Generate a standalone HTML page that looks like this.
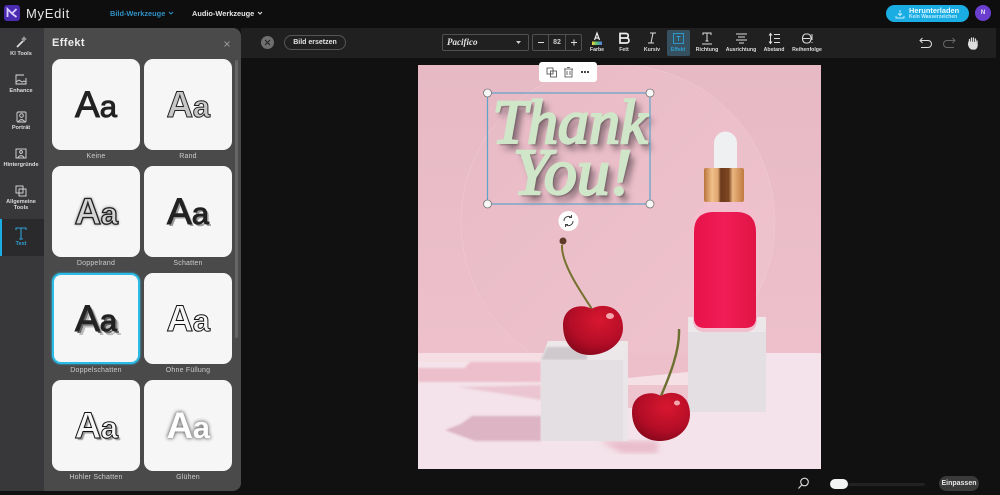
<!DOCTYPE html>
<html lang="de"><head><meta charset="utf-8"><title>MyEdit</title>
<style>
*{box-sizing:border-box;margin:0;padding:0}
html,body{width:1000px;height:495px;overflow:hidden;background:#111112;font-family:"Liberation Sans",sans-serif;color:#e8e8e8}
.a{position:absolute}
.c{position:absolute;text-align:center;transform:translateX(-50%);white-space:nowrap;font-weight:bold}
.side{font-size:5.6px;line-height:6px;color:#ddd}
.tl{font-size:5.2px;color:#ddd;top:47px}
.tile{position:absolute;width:88px;height:91px;background:#f6f6f6;border-radius:9px;display:flex;align-items:center;justify-content:center}
.aa{font:normal 37px/40px "Liberation Sans",sans-serif;color:#222;-webkit-text-stroke:1px #222;margin-top:2px}
.aa i{font-style:normal;font-size:31px}
.h{font-weight:bold;letter-spacing:-.5px}
.lab{position:absolute;width:88px;text-align:center;font-size:7px;color:#ccc;letter-spacing:.2px}
svg{position:absolute;overflow:visible}
</style></head><body>
<div class="a" style="left:0;top:0;width:1000px;height:28px;background:#0e0e0f"></div>
<div class="a" style="left:241px;top:28px;width:755px;height:30px;background:#202021"></div>

<svg style="left:4px;top:5px" width="16" height="16" viewBox="0 0 16 16"><rect width="16" height="16" rx="3" fill="#4b2bb0"/><path d="M3.500 12V4L8 8.500 12.500 4M8.500 9l4 3" fill="none" stroke="#d9d0ff" stroke-width="1.800"/></svg>
<div class="a" style="left:26px;top:5px;font-size:13px;line-height:18px;color:#e6e6e6;letter-spacing:.7px">MyEdit</div>
<div class="a" style="left:110px;top:9px;font-size:7.400px;line-height:10px;font-weight:bold;color:#2f90c4">Bild-Werkzeuge</div>
<svg style="left:168px;top:11px" width="6" height="5"><path d="M1 1l2 2 2-2" fill="none" stroke="#2f90c4" stroke-width="1"/></svg>
<div class="a" style="left:192px;top:9px;font-size:7.400px;line-height:10px;font-weight:bold;color:#e5e5e5">Audio-Werkzeuge</div>
<svg style="left:257px;top:11px" width="6" height="5"><path d="M1 1l2 2 2-2" fill="none" stroke="#e5e5e5" stroke-width="1"/></svg>

<div class="a" style="left:886px;top:5px;width:83px;height:17px;border-radius:9px;background:#19ade4"></div>
<svg style="left:895px;top:9px" width="10" height="10" viewBox="0 0 10 10"><path d="M5 1v5M3 4.500l2 2 2-2M1 7v2h8V7" fill="none" stroke="#c9eefa" stroke-width=".9"/></svg>
<div class="a" style="left:909px;top:6.500px;font-size:7.400px;line-height:8px;font-weight:bold;color:#eafaff">Herunterladen</div>
<div class="a" style="left:909px;top:14px;font-size:5px;line-height:6px;font-weight:bold;color:#c5eefb">Kein Wasserzeichen</div>
<div class="a" style="left:975px;top:5px;width:16px;height:16px;border-radius:50%;background:#6a3fcf;color:#eee;font-size:6px;font-weight:bold;line-height:16px;text-align:center">N</div>

<!-- left rail + panel -->
<div class="a" style="left:0;top:28px;width:241px;height:463px;background:#4a4a4b;border-radius:0 8px 8px 0"></div>
<div class="a" style="left:0;top:28px;width:44px;height:463px;background:#38383a"></div>
<div class="a" style="left:0;top:219px;width:44px;height:37px;background:#2a2a2c"></div>
<div class="a" style="left:0;top:219px;width:2px;height:37px;background:#19ade4"></div>

<svg style="left:15px;top:36px" width="12" height="12" viewBox="0 0 12 12" fill="none" stroke="#ddd"><path d="M2 11l6-6" stroke-width="1.800"/><path d="M9 1l.6 1.400L11 3l-1.400.6L9 5l-.6-1.400L7 3l1.400-.6z" stroke-width=".7"/></svg>
<div class="c side" style="left:21px;top:51px">KI Tools</div>
<svg style="left:15px;top:74px" width="12" height="11" viewBox="0 0 12 11" fill="none" stroke="#ddd"><path d="M9 1H1v9h10V4M1 8l3-2 3 2 2-1 2 1" stroke-width=".9"/></svg>
<div class="c side" style="left:21px;top:88px">Enhance</div>
<svg style="left:16px;top:111px" width="11" height="12" viewBox="0 0 11 12" fill="none" stroke="#ddd" stroke-width=".9"><rect x="1" y="1" width="9" height="10" rx="1"/><circle cx="5.500" cy="4.500" r="1.800"/><path d="M2.500 11c0-3 6-3 6 0"/></svg>
<div class="c side" style="left:21px;top:125px">Porträt</div>
<svg style="left:15px;top:148px" width="12" height="11" viewBox="0 0 12 11" fill="none" stroke="#ddd" stroke-width=".9"><rect x="1" y="1" width="10" height="9"/><circle cx="6" cy="4" r="1.400"/><path d="M3 10c0-3 6-3 6 0"/></svg>
<div class="c side" style="left:21px;top:162px">Hintergründe</div>
<svg style="left:15px;top:185px" width="12" height="12" viewBox="0 0 12 12" fill="none" stroke="#ddd" stroke-width=".9"><rect x="1" y="1" width="7" height="7"/><rect x="4" y="4" width="7" height="7"/></svg>
<div class="c side" style="left:21px;top:199px">Allgemeine<br>Tools</div>
<svg style="left:15px;top:227px" width="12" height="13" viewBox="0 0 12 13" fill="none" stroke="#2f9fd2" stroke-width="1.100"><path d="M1 3V1h10v2M6 1v11M4 12h4"/></svg>
<div class="c side" style="left:21px;top:241px;color:#2f9fd2">Text</div>

<div class="a" style="left:52px;top:37px;font-size:11px;line-height:13px;font-weight:bold;color:#eee;letter-spacing:.4px">Effekt</div>
<svg style="left:224px;top:41px" width="6" height="6"><path d="M.5.500l5 5m0-5l-5 5" stroke="#aaa" stroke-width=".8"/></svg>
<div class="a" style="left:235px;top:60px;width:3px;height:278px;background:#666;border-radius:2px"></div>

<div class="tile" style="left:52px;top:59px"><span class="aa">A<i>a</i></span></div>
<div class="tile" style="left:144px;top:59px"><span class="aa h" style="color:#c8c8c8;-webkit-text-stroke:1px #222">A<i>a</i></span></div>
<div class="tile" style="left:52px;top:166px"><span class="aa h" style="color:#d4d4d4;-webkit-text-stroke:1.300px #222;text-shadow:0 0 3px #555">A<i>a</i></span></div>
<div class="tile" style="left:144px;top:166px"><span class="aa" style="text-shadow:2px 2px 0 #999">A<i>a</i></span></div>
<div class="tile" style="left:52px;top:273px;border:2px solid #2cbbe6;box-shadow:0 0 2px #2cbbe6"><span class="aa" style="text-shadow:2px 2px 0 #666,4px 4px 0 #bbb">A<i>a</i></span></div>
<div class="tile" style="left:144px;top:273px"><span class="aa h" style="color:#f6f6f6;-webkit-text-stroke:1px #111">A<i>a</i></span></div>
<div class="tile" style="left:52px;top:380px"><span class="aa h" style="color:#f6f6f6;-webkit-text-stroke:1px #111;text-shadow:2px 2px 1px #999">A<i>a</i></span></div>
<div class="tile" style="left:144px;top:380px"><span class="aa h" style="color:#fff;-webkit-text-stroke:0;text-shadow:0 0 3px #666,0 0 5px #888">A<i>a</i></span></div>
<div class="lab" style="left:52px;top:153px">Keine</div>
<div class="lab" style="left:144px;top:153px">Rand</div>
<div class="lab" style="left:52px;top:260px">Doppelrand</div>
<div class="lab" style="left:144px;top:260px">Schatten</div>
<div class="lab" style="left:52px;top:367px">Doppelschatten</div>
<div class="lab" style="left:144px;top:367px">Ohne Füllung</div>
<div class="lab" style="left:52px;top:474px">Hohler Schatten</div>
<div class="lab" style="left:144px;top:474px">Glühen</div>

<!-- toolbar -->
<div class="a" style="left:261px;top:36px;width:13px;height:13px;border-radius:50%;background:#6f6f70"></div>
<svg style="left:265px;top:40px" width="5" height="5"><path d="M0 0l5 5m0-5l-5 5" stroke="#222" stroke-width="1"/></svg>
<div class="a" style="left:284px;top:35px;width:62px;height:15px;border:1px solid #555;border-radius:8px;font-size:7px;font-weight:bold;line-height:13px;text-align:center;color:#e3e3e3">Bild ersetzen</div>
<div class="a" style="left:442px;top:34px;width:87px;height:17px;border:1px solid #505050;border-radius:2px"></div>
<div class="a" style="left:447px;top:37px;font:italic bold 9px/11px 'Liberation Serif',serif;color:#e5e5e5">Pacifico</div>
<svg style="left:516px;top:41px" width="5" height="3"><path d="M0 0h5L2.500 3z" fill="#ccc"/></svg>
<div class="a" style="left:532px;top:34px;width:50px;height:17px;border:1px solid #505050;border-radius:2px"></div>
<div class="a" style="left:548px;top:34px;width:18px;height:17px;border:1px solid #505050;border-width:0 1px;font-size:7px;font-weight:bold;line-height:17px;text-align:center;color:#ccc">82</div>
<svg style="left:537px;top:39px" width="40" height="7"><path d="M1 3.500h6M34 3.500h6M37 .5v6" stroke="#ddd" stroke-width="1"/></svg>

<svg style="left:591px;top:32px" width="12" height="14" viewBox="0 0 12 14"><path d="M3.500 8L6 1l2.500 7M4.500 6h3" fill="none" stroke="#eee" stroke-width="1.200"/><defs><linearGradient id="rb" x1="0" x2="1"><stop offset="0" stop-color="#f6d53b"/><stop offset=".5" stop-color="#4fc07a"/><stop offset="1" stop-color="#5a7be0"/></linearGradient></defs><rect x="1" y="9.500" width="10" height="3.500" fill="url(#rb)"/></svg>
<div class="c tl" style="left:597px">Farbe</div>
<svg style="left:618px;top:32px" width="12" height="12" viewBox="0 0 12 12"><path d="M2 1.500h6a2.200 2.200 0 010 4.500H2zM2 6h6.500a2.500 2.500 0 010 5H2z" fill="none" stroke="#eee" stroke-width="1.700"/></svg>
<div class="c tl" style="left:624px">Fett</div>
<svg style="left:647px;top:32px" width="10" height="12" viewBox="0 0 10 12"><path d="M3 1h6M1 11h6M6 1L4 11" fill="none" stroke="#ddd" stroke-width="1"/></svg>
<div class="c tl" style="left:652px">Kursiv</div>
<div class="a" style="left:667px;top:30px;width:23px;height:26px;border-radius:2px;background:#37505f"></div>
<svg style="left:673px;top:33px" width="11" height="11" viewBox="0 0 11 11" fill="none" stroke="#2f9fd2" stroke-width=".9"><rect x=".5" y=".5" width="10" height="10"/><path d="M3.500 3.500h4M5.500 3.500v4.500"/></svg>
<div class="c tl" style="left:678px;color:#2f9fd2">Effekt</div>
<svg style="left:701px;top:32px" width="12" height="13" viewBox="0 0 12 13" fill="none" stroke="#ddd" stroke-width="1"><path d="M2 3V1h8v2M6 1v8M4.500 9h3M1 12h10"/></svg>
<div class="c tl" style="left:707px">Richtung</div>
<svg style="left:735px;top:33px" width="12" height="11"><path d="M1 1h11M3 4h7M1 7h11M4 10h5" stroke="#ddd" stroke-width="1"/></svg>
<div class="c tl" style="left:741px">Ausrichtung</div>
<svg style="left:769px;top:33px" width="11" height="11"><path d="M1.500 1v9M0 2.500l1.500-2 1.500 2M0 8.500l1.500 2 1.500-2M5 1.500h6M5 5.500h6M5 9.500h6" stroke="#ddd" stroke-width="1" fill="none"/></svg>
<div class="c tl" style="left:774px">Abstand</div>
<svg style="left:801px;top:33px" width="12" height="11" viewBox="0 0 12 11" fill="none" stroke="#ddd"><path d="M4.500 1h2.500a3 4.500 0 010 9H4.500a3 4.500 0 010-9z" stroke-width="1.100"/><path d="M2 5.500h7M11 1v6M11 9v1" stroke-width="1"/></svg>
<div class="c tl" style="left:807px">Reihenfolge</div>

<svg style="left:919px;top:37px" width="13" height="13" viewBox="0 0 13 13" fill="none" stroke="#ddd" stroke-width="1"><path d="M3.500 1L1 3.500 3.500 6M1 3.500h8a3 3 0 010 7H2"/></svg>
<svg style="left:943px;top:37px" width="13" height="13" viewBox="0 0 13 13" fill="none" stroke="#666" stroke-width="1"><path d="M9.500 1L12 3.500 9.500 6M12 3.500H4a3 3 0 000 7h7"/></svg>
<svg style="left:967px;top:36px" width="12" height="14" viewBox="0 0 12 14"><path d="M2.500 6V3.500M4.500 6V2M6.500 6V2M8.500 6V3M10 7V5M2 6c-1 2 0 6 3 7h3c2-1 2.500-3 2-6z" fill="#ddd" stroke="#ddd" stroke-width="1.300" stroke-linecap="round"/></svg>

<!-- canvas photo -->
<svg style="left:418px;top:65px" width="403" height="404" viewBox="418 65 403 404">
<defs>
<clipPath id="ph"><rect x="418" y="65" width="403" height="404"/></clipPath>
<linearGradient id="wall" x1="0" y1="0" x2="0" y2="1"><stop offset="0" stop-color="#e6b9c5"/><stop offset=".6" stop-color="#ecbfca"/><stop offset="1" stop-color="#f0c5cf"/></linearGradient>
<linearGradient id="circ" x1="0" y1="0" x2="1" y2="1"><stop offset="0" stop-color="#e7bac6"/><stop offset="1" stop-color="#f0c4ce"/></linearGradient>
<linearGradient id="gold" x1="0" x2="1"><stop offset="0" stop-color="#b9733c"/><stop offset=".2" stop-color="#f1c08a"/><stop offset=".35" stop-color="#e0a670"/><stop offset=".42" stop-color="#6b3a1c"/><stop offset=".62" stop-color="#7d4720"/><stop offset=".72" stop-color="#eab680"/><stop offset="1" stop-color="#c07a40"/></linearGradient>
<linearGradient id="red" x1="0" x2="1"><stop offset="0" stop-color="#e8124a"/><stop offset=".5" stop-color="#f01d56"/><stop offset="1" stop-color="#e11445"/></linearGradient>
<radialGradient id="ch" cx=".6" cy=".3" r=".8"><stop offset="0" stop-color="#d8172f"/><stop offset=".6" stop-color="#b30d27"/><stop offset="1" stop-color="#7d0618"/></radialGradient>
<filter id="b1"><feGaussianBlur stdDeviation="1"/></filter>
<filter id="b3"><feGaussianBlur stdDeviation="3"/></filter>
</defs>
<g clip-path="url(#ph)">
<rect x="418" y="65" width="403" height="404" fill="url(#wall)"/>
<circle cx="618" cy="222" r="157" fill="url(#circ)" stroke="#f2ccd6" stroke-width=".5"/>
<rect x="418" y="353" width="403" height="116" fill="#f4e3ea"/>
<!-- floor bands -->
<path d="M418 353h125v9H418z" fill="#f5dfe5"/>
<path d="M418 368h47l5-6h71v20H418z" fill="#edbecb" filter="url(#b1)"/>
<path d="M458 387l83-2v15l-30-5z" fill="#ebc6d2" filter="url(#b1)"/>
<path d="M445 430l16-6 11-8h69v25h-66z" fill="#dcb4c4" filter="url(#b1)"/>
<path d="M628 353h60v25h-60z" fill="#edbfcb"/>
<path d="M628 378l60-6v13h-60z" fill="#f5e0e6"/>
<path d="M628 385h60v23h-60z" fill="#eec4cf"/>
<path d="M600 441h58v12h-36z" fill="#e9bccb" filter="url(#b3)"/>
<!-- right box -->
<path d="M688 317h78v17h-78z" fill="#ece8ea"/><rect x="688" y="332" width="78" height="80" fill="#e3dfe2"/>
<!-- bottle -->
<path d="M704 200h42v6c7 3 11 9 11 18v96c0 8-5 12-12 12h-40c-7 0-12-4-12-12v-96c0-9 4-15 11-18z" fill="#f1bfcd"/>
<path d="M694 232q0-19 18-20h26q18 1 18 20v86q0 10-11 10h-40q-11 0-11-10z" fill="url(#red)"/>
<path d="M714 168V143a11.500 11.500 0 0123 0v25l3 2h-29z" fill="#eef0f2"/>
<rect x="704" y="168" width="40" height="34" rx="2" fill="url(#gold)"/>
<!-- left box -->
<path d="M548 341h80v21l-87-2z" fill="#ece7e9"/>
<path d="M547 347h40v13h-46z" fill="#cfc9cd" filter="url(#b1)"/>
<rect x="541" y="360" width="82" height="81" fill="#e3dfe3"/>
<path d="M623 360l5-18v99h-5z" fill="#e9e5e8"/>
<!-- cherries -->
<path d="M562 245C561 262 578 288 592 309" fill="none" stroke="#77722f" stroke-width="2"/>
<circle cx="563" cy="241" r="3.500" fill="#5e3a28"/>
<path d="M592 309C600 303 623 304 623 328 623 345 605 355 590 355 575 355 563 345 563 325 563 306 582 303 592 309z" fill="url(#ch)"/>
<ellipse cx="610" cy="316" rx="4" ry="3" fill="#f3a6ad"/>
<path d="M679 329C680 350 670 375 661 396" fill="none" stroke="#6c7030" stroke-width="2.400"/>
<path d="M661 396C669 390 690 391 690 414 690 431 675 441 660 441 645 441 632 431 632 412 632 393 652 390 661 396z" fill="url(#ch)"/>
<ellipse cx="677" cy="403" rx="3" ry="2.500" fill="#f3a6ad"/>
</g>
</svg>

<!-- text -->
<div class="a" style="left:418px;top:65px;width:403px;height:404px;overflow:hidden">
<div class="a" style="left:72px;top:33px;font:italic 62px/50px 'Liberation Serif',serif;color:#cfe6c8;text-align:center;width:160px;text-shadow:2px 2px 2px #6f5a62,5px 6px 7px #6d5860;-webkit-text-stroke:2.400px #cfe6c8">Thank<br><span style="font-size:66px;margin-left:5px">You!</span></div>
</div>

<!-- selection -->
<svg style="left:0;top:0" width="1000" height="495">
<rect x="487.500" y="93" width="162.500" height="111" fill="none" stroke="#5ea3c9" stroke-width="1.200"/>
<g fill="#f7f7f7" stroke="#777" stroke-width=".8"><circle cx="487.500" cy="93" r="4"/><circle cx="650" cy="93" r="4"/><circle cx="487.500" cy="204" r="4"/><circle cx="650" cy="204" r="4"/></g>
<rect x="539" y="62" width="58" height="20" rx="3" fill="#fff"/>
<g fill="none" stroke="#444" stroke-width=".8"><rect x="547" y="68" width="6" height="6"/><rect x="550.500" y="71" width="6" height="6"/><path d="M564 69h9M565 69v8h7v-8M567 67.500h3M567 71v4M570 71v4"/></g>
<g fill="#333"><circle cx="582" cy="72" r="1.100"/><circle cx="585" cy="72" r="1.100"/><circle cx="588" cy="72" r="1.100"/></g>
<circle cx="568.500" cy="221" r="10" fill="#fff"/>
<g fill="none" stroke="#444" stroke-width="1"><path d="M564 221a4.500 4.500 0 017-3.800M573 221a4.500 4.500 0 01-7 3.800"/><path d="M571.500 215v2.500h-2.500M565.500 227v-2.500h2.500"/></g>
</svg>

<!-- bottom -->
<svg style="left:797px;top:477px" width="13" height="13" viewBox="0 0 13 13" fill="none" stroke="#ddd" stroke-width="1.100"><circle cx="7.500" cy="5" r="3.800"/><path d="M4.700 8L1.500 11.500"/></svg>
<div class="a" style="left:848px;top:483px;width:77px;height:3px;background:#222;border-radius:2px"></div>
<div class="a" style="left:830px;top:479px;width:18px;height:10px;background:#f4f4f4;border-radius:5px"></div>
<div class="a" style="left:939px;top:476px;width:40px;height:15px;border-radius:8px;background:#3a3a3b;font-size:7px;font-weight:bold;line-height:15px;text-align:center;color:#e6e6e6">Einpassen</div>
</body></html>
